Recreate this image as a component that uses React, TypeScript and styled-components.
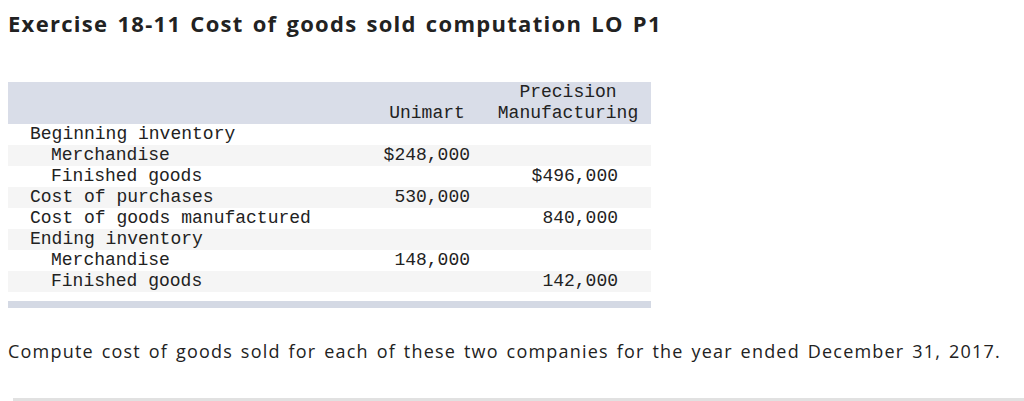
import React from 'react'
import styled, { createGlobalStyle } from 'styled-components'

const GlobalStyle = createGlobalStyle`
  html, body {
    margin: 0;
    padding: 0;
    background: #ffffff;
  }
`

const colors = {
  text: '#222222',
  headerBand: '#d9dde8',
  stripe: '#f5f5f5',
  footBand: '#d4d9e4',
  divider: '#e1e1e1'
}

const COLUMNS = '372px 105px 166px'

const Page = styled.div`
  padding: 0 8px;
  color: ${colors.text};
  font-family: 'Open Sans', Lato, Arial, sans-serif;
`

const Title = styled.h2`
  margin: 0;
  padding-top: 10px;
  font-size: 22px;
  line-height: 26px;
  font-weight: 700;
  letter-spacing: 1.3px;
  word-spacing: 2px;
`

const Table = styled.div`
  margin-top: 46px;
  width: 643px;
  font-family: 'Liberation Mono', 'Courier New', monospace;
  font-size: 18px;
  line-height: 21px;
`

const HeadRow = styled.div`
  display: grid;
  grid-template-columns: ${COLUMNS};
  background: ${colors.headerBand};
  height: 42px;
`

const HeadCell = styled.div<{ $padRight?: number }>`
  display: flex;
  flex-direction: column;
  justify-content: flex-end;
  align-items: center;
  text-align: center;
  padding-right: ${({ $padRight }) => $padRight ?? 0}px;
`

const Row = styled.div<{ $shaded?: boolean }>`
  display: grid;
  grid-template-columns: ${COLUMNS};
  height: 21px;
  background: ${({ $shaded }) => ($shaded ? colors.stripe : 'transparent')};
`

const Label = styled.div<{ $indent?: boolean }>`
  padding-left: ${({ $indent }) => ($indent ? 43 : 22)}px;
  white-space: pre;
`

const Amount = styled.div<{ $padRight: number }>`
  text-align: right;
  padding-right: ${({ $padRight }) => $padRight}px;
  white-space: pre;
`

const FootBand = styled.div`
  margin-top: 9px;
  height: 7px;
  background: ${colors.footBand};
`

const Prompt = styled.p`
  margin: 32px 0 0;
  font-size: 18px;
  line-height: 22px;
  letter-spacing: 1.2px;
  word-spacing: 2px;
`

const Divider = styled.div`
  margin: 36px -8px 0 5px;
  height: 4px;
  background: ${colors.divider};
`

interface LineItem {
  label: string
  indent?: boolean
  unimart?: string
  precision?: string
}

const rows: LineItem[] = [
  { label: 'Beginning inventory' },
  { label: 'Merchandise', indent: true, unimart: '$248,000' },
  { label: 'Finished goods', indent: true, precision: '$496,000' },
  { label: 'Cost of purchases', unimart: '530,000' },
  { label: 'Cost of goods manufactured', precision: '840,000' },
  { label: 'Ending inventory' },
  { label: 'Merchandise', indent: true, unimart: '148,000' },
  { label: 'Finished goods', indent: true, precision: '142,000' }
]

export default function App() {
  return (
    <Page>
      <GlobalStyle />
      <Title>Exercise 18-11 Cost of goods sold computation LO P1</Title>
      <Table>
        <HeadRow>
          <HeadCell />
          <HeadCell $padRight={11}>Unimart</HeadCell>
          <HeadCell>
            <span>Precision</span>
            <span>Manufacturing</span>
          </HeadCell>
        </HeadRow>
        {rows.map((row, index) => (
          <Row key={index} $shaded={index % 2 === 1}>
            <Label $indent={row.indent}>{row.label}</Label>
            <Amount $padRight={15}>{row.unimart ?? ''}</Amount>
            <Amount $padRight={33}>{row.precision ?? ''}</Amount>
          </Row>
        ))}
        <FootBand />
      </Table>
      <Prompt>Compute cost of goods sold for each of these two companies for the year ended December 31, 2017.</Prompt>
      <Divider />
    </Page>
  )
}
